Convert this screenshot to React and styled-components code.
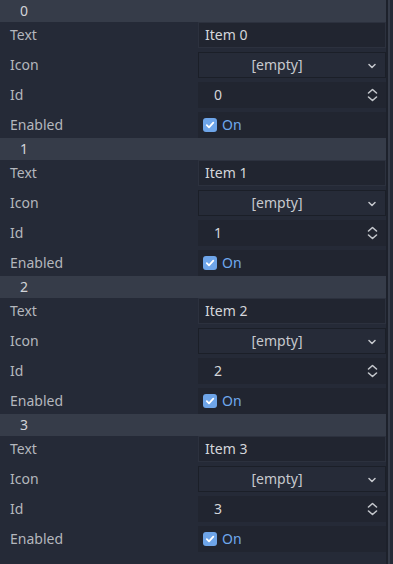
import React from "react";
import styled, { createGlobalStyle } from "styled-components";

const GlobalStyle = createGlobalStyle`
  html, body {
    margin: 0;
    padding: 0;
    background: #252a37;
  }
  body {
    font-family: "Noto Sans", "DejaVu Sans", sans-serif;
    font-size: 14px;
  }
`;

const Root = styled.div`
  display: flex;
  width: 393px;
  height: 564px;
  overflow: hidden;
  background: #252a37;
`;

const Inspector = styled.div`
  flex: 0 0 386px;
  display: flex;
  flex-direction: column;
`;

const Scrollbar = styled.div`
  flex: 1;
  display: flex;
`;

const ScrollTrack = styled.div`
  width: ${(p) => p.$w}px;
  background: ${(p) => p.$c};
`;

const Group = styled.section`
  display: flex;
  flex-direction: column;
`;

const Header = styled.div`
  height: 22px;
  line-height: 21px;
  padding-left: 20px;
  background: #363c49;
  color: #d2d4d8;
`;

const Rows = styled.div`
  display: grid;
  grid-template-columns: 198px 188px;
  grid-auto-rows: 26px;
  row-gap: 4px;
`;

const Label = styled.div`
  display: flex;
  align-items: center;
  padding-left: 10px;
  padding-bottom: 2px;
  color: #b4b7bd;
`;

const LineEdit = styled.div`
  display: flex;
  align-items: center;
  box-sizing: border-box;
  padding-left: 6px;
  padding-bottom: 2px;
  background: #212530;
  border: 1px solid #2c313e;
  color: #d4d6da;
`;

const Picker = styled.div`
  position: relative;
  display: flex;
  align-items: center;
  justify-content: center;
  box-sizing: border-box;
  padding-right: 30px;
  padding-bottom: 2px;
  background: #262b38;
  border: 1px solid #1b1f28;
  color: #c7c9ce;
`;

const Chevron = styled.svg`
  position: absolute;
  right: 9px;
  top: 10px;
`;

const Spin = styled.div`
  position: relative;
  display: flex;
  align-items: center;
  padding-left: 16px;
  padding-bottom: 2px;
  background: #212530;
  color: #d4d6da;
`;

const SpinArrows = styled.svg`
  position: absolute;
  right: 8px;
  top: 6px;
`;

const CheckCell = styled.div`
  display: flex;
  align-items: center;
  gap: 5px;
  padding-left: 5px;
  background: #212530;
  color: #6fa8ec;
`;

const CheckText = styled.span`
  padding-bottom: 2px;
`;

const Box = styled.span`
  display: flex;
  align-items: center;
  justify-content: center;
  width: 14px;
  height: 14px;
  border-radius: 3px;
  background: #6ea5e9;
`;

function Item({ n }) {
  return (
    <Group>
      <Header>{n}</Header>
      <Rows>
        <Label>Text</Label>
        <LineEdit>Item {n}</LineEdit>
        <Label>Icon</Label>
        <Picker>
          [empty]
          <Chevron width="8" height="6" viewBox="0 0 8 6">
            <path d="M1 1.5 L4 4.5 L7 1.5" fill="none" stroke="#c4c7cc" strokeWidth="1.5" strokeLinecap="round" strokeLinejoin="round" />
          </Chevron>
        </Picker>
        <Label>Id</Label>
        <Spin>
          {n}
          <SpinArrows width="11" height="14" viewBox="0 0 11 14">
            <path d="M1.5 5 L5.5 1.5 L9.5 5 M1.5 9 L5.5 12.5 L9.5 9" fill="none" stroke="#c4c7cc" strokeWidth="1.6" strokeLinecap="round" strokeLinejoin="round" />
          </SpinArrows>
        </Spin>
        <Label>Enabled</Label>
        <CheckCell>
          <Box>
            <svg width="10" height="10" viewBox="0 0 10 10">
              <path d="M1.8 5.2 L4 7.4 L8.3 2.6" fill="none" stroke="#ffffff" strokeWidth="1.8" strokeLinecap="round" strokeLinejoin="round" />
            </svg>
          </Box>
          <CheckText>On</CheckText>
        </CheckCell>
      </Rows>
    </Group>
  );
}

export default function App() {
  return (
    <Root>
      <GlobalStyle />
      <Inspector>
        {[0, 1, 2, 3].map((n) => (
          <Item key={n} n={n} />
        ))}
      </Inspector>
      <Scrollbar>
        <ScrollTrack $w={2} $c="#1d212b" />
        <ScrollTrack $w={2} $c="#363c49" />
        <ScrollTrack $w={3} $c="#252a37" />
      </Scrollbar>
    </Root>
  );
}
